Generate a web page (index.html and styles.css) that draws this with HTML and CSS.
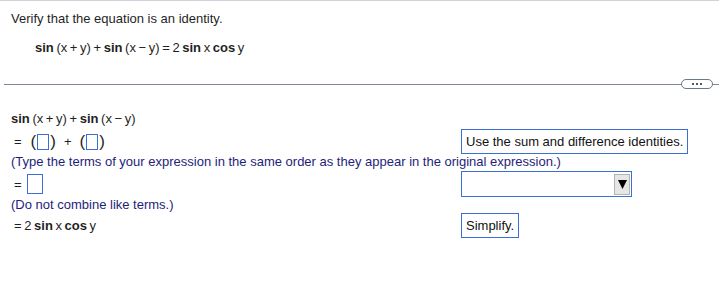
FILE: index.html
```html
<!DOCTYPE html>
<html>
<head>
<meta charset="utf-8">
<link rel="stylesheet" href="styles.css">
</head>
<body>
<div class="topline"></div>
<p class="prompt">Verify that the equation is an identity.</p>
<p class="eq math"><b>sin</b> (x + y) + <b>sin</b> (x − y) = 2 <b>sin</b> x <b>cos</b> y</p>
<div class="divider"><span class="line"></span><span class="pill"><i></i><i></i><i></i></span><span class="tail"></span></div>
<div class="work">
  <p class="expr math"><b>sin</b> (x + y) + <b>sin</b> (x − y)</p>
  <div class="row r1">
    <div class="left"><span class="eqsign">=</span><span class="paren">(</span><span class="ans"></span><span class="paren">)</span><span class="plus">+</span><span class="paren">(</span><span class="ans"></span><span class="paren">)</span></div>
    <div class="right"><span class="hint">Use the sum and difference identities.</span></div>
  </div>
  <p class="note">(Type the terms of your expression in the same order as they appear in the original expression.)</p>
  <div class="row r2">
    <div class="left"><span class="eqsign short">=</span><span class="ans big"></span></div>
    <div class="right"><div class="select"><span class="arrow"><svg width="9" height="10" viewBox="0 0 9 10"><polygon points="0,1 9,1 4.5,10" fill="#000"/></svg></span></div></div>
  </div>
  <p class="note">(Do not combine like terms.)</p>
  <div class="row r3">
    <div class="left"><span class="final math">= 2 <b>sin</b> x <b>cos</b> y</span></div>
    <div class="right"><span class="hint">Simplify.</span></div>
  </div>
</div>
</body>
</html>
```

FILE: styles.css
```css
html, body {
  margin: 0;
  padding: 0;
  background: #ffffff;
}
body {
  font-family: "Liberation Sans", Arial, sans-serif;
  font-size: 13px;
  color: #1f1f1f;
}
p { margin: 0; }
.math {
  word-spacing: -1px;
}
.topline {
  height: 1px;
  background: #cfd3dc;
}
.prompt {
  margin-top: 10px;
  padding-left: 11px;
  line-height: 16px;
}
.eq {
  margin-top: 13px;
  padding-left: 35px;
  line-height: 16px;
}
.divider {
  margin-top: 23px;
  height: 10px;
  display: flex;
  align-items: center;
  padding-left: 4px;
}
.divider .line {
  flex: 1;
  height: 1px;
  background: #7d8799;
}
.divider .tail {
  width: 6px;
  height: 1px;
  background: #7d8799;
}
.pill {
  width: 30px;
  height: 8px;
  border: 1px solid #6c788b;
  border-radius: 5px;
  display: flex;
  align-items: center;
  justify-content: center;
  gap: 2px;
}
.pill i {
  width: 2px;
  height: 2px;
  background: #4e586a;
  display: block;
}
.work {
  margin-top: 22px;
  padding-left: 11px;
}
.expr {
  line-height: 16px;
}
.row {
  display: flex;
  align-items: center;
}
.r1 { margin-top: 2px; }
.r2 { margin-top: 1px; }
.left {
  width: 450px;
  flex: none;
  display: flex;
  align-items: center;
}
.right {
  display: flex;
}
.eqsign {
  margin: 0 9px 0 3px;
}
.eqsign.short {
  margin-right: 5px;
}
.paren {
  font-size: 17px;
  line-height: 20px;
}
.ans {
  display: inline-block;
  width: 10px;
  height: 14px;
  border: 1px solid #3a6fd4;
  margin: 0 1px;
}
.ans.big {
  width: 14px;
  height: 18px;
  margin: 0;
}
.plus {
  margin: 0 8px 0 8px;
}
.final {
  padding-left: 3px;
}
.hint {
  display: inline-block;
  border: 1px solid #3a6fd4;
  padding: 0 4px 0 4px;
  line-height: 23px;
  color: #111;
}
.note {
  color: #1e1e7a;
  line-height: 16px;
}
.select {
  width: 168px;
  height: 24px;
  border: 1px solid #3a6fd4;
  display: flex;
  justify-content: flex-end;
  align-items: center;
  padding-right: 1px;
  box-sizing: content-box;
}
.arrow {
  width: 14px;
  height: 19px;
  border: 1px solid #b4b4b4;
  background: #e6e6e6;
  display: flex;
  align-items: center;
  justify-content: center;
}
.arrow svg {
  display: block;
}
```
